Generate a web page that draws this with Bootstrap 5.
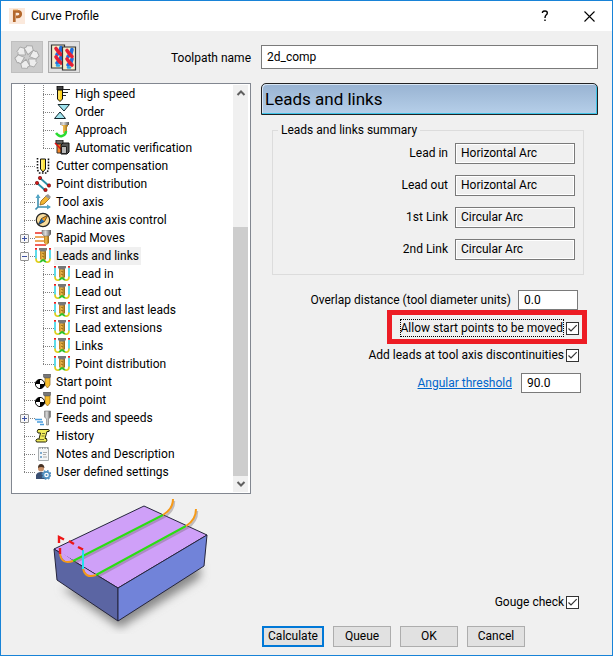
<!DOCTYPE html>
<html lang="en">
<head>
<meta charset="utf-8">
<meta name="viewport" content="width=device-width, initial-scale=1">
<title>Curve Profile</title>
<link href="https://cdn.jsdelivr.net/npm/bootstrap@5.3.0/dist/css/bootstrap.min.css" rel="stylesheet">
<style>
  body { font: 12px/18px Roboto, "Open Sans", sans-serif; color: #000; background: #f0f0f0; }
  .dialog { border: 1px solid #1883d7; }
  .titlebar { height: 30px; }
  .titlebar .logo { margin: 0 6px 0 8px; }
  .titlebar button, .scroller button, .tool { border: 0; background: none; padding: 0; color: #000; display: flex; align-items: center; justify-content: center; }
  .titlebar button { width: 45px; height: 28px; }
  .dialog-body { display: grid; grid-template-columns: 240px 1fr; grid-template-rows: 42px 1fr; column-gap: 10px; row-gap: 0; padding: 10px 14px 8px 10px; }
  .tools { gap: 5px; }
  .tool { width: 32px; height: 32px; border: 1px solid #adadad; background: #e1e1e1; }
  .tool:disabled { background: #ccc; border-color: #bfbfbf; }
  .form-control { font-size: 12px; line-height: 16px; color: #000; border: 1px solid #7a7a7a; border-radius: 0; padding: 0 5px; }
  .path-name { height: 24px; margin-top: 4px; }
  .tree { border: 1px solid #828790; background: #fff; height: 411px; }
  .tree ul { padding-top: 1px; }
  .tree li { height: 18px; display: flex; align-items: center; position: relative; padding-left: 12px; white-space: nowrap; }
  .tree svg { width: 16px; height: 16px; flex: none; margin-right: 3px; overflow: visible; }
  .tree a { color: #000; text-decoration: none; padding: 0 2px; }
  .tree a.current { background: #f0f0f0; }
  .stem, .arm { align-self: stretch; flex: none; background: repeating-linear-gradient(#808080 0 1px, transparent 1px 2px) 0 0 / 1px 100% no-repeat; }
  .stem { width: 19px; }
  .arm { width: 11px; background: repeating-linear-gradient(#808080 0 1px, transparent 1px 2px) 0 0 / 1px 100% no-repeat, repeating-linear-gradient(90deg, #808080 0 1px, transparent 1px 2px) 0 9px / 100% 1px no-repeat; }
  .arm.end { background-size: 1px 10px, 100% 1px; }
  .toggle { position: absolute; left: 8px; top: 5px; width: 9px; height: 9px; border: 1px solid #919191; border-radius: 1px; padding: 0; background: linear-gradient(#3c50a0, #3c50a0) center / 5px 1px no-repeat, #f8f8f8; }
  .toggle.closed { background: linear-gradient(#3c50a0, #3c50a0) center / 5px 1px no-repeat, linear-gradient(#3c50a0, #3c50a0) center / 1px 5px no-repeat, #f8f8f8; }
  .scroller { width: 15px; margin: 1px 2px 1px 0; background: #f0f0f0; }
  .scroller button { height: 16px; }
  .thumb { height: 249px; background: #cdcdcd; }
  .banner { height: 32px; font-size: 17px; line-height: 31px; padding-left: 3px; border: 1px solid #222; border-radius: 5px 5px 0 0; background: linear-gradient(#98b3d2, #b6cfe9); box-shadow: inset -1px -1px #3fc4e8, inset 1px 1px #d8e6f4; }
  .summary { margin: 6px 14px 0 11px; min-width: 0; border: 1px solid #dcdcdc; padding: 0 8px 9px; }
  .summary legend { float: none; width: auto; font-size: 12px; line-height: 18px; margin: 0 0 -2px -3px; padding: 0 3px; }
  .summary .form-control { width: 120px; height: 21px; background: #f0f0f0; box-shadow: inset 0 0 0 1px #fff; }
  .pair { display: flex; justify-content: flex-end; align-items: center; }
  .summary .pair { gap: 7px; height: 32px; }
  .number { width: 60px; height: 20px; }
  .overlap { margin-top: 14px; height: 21px; padding-right: 20px; gap: 7px; }
  .tick { height: 22px; padding-right: 19px; gap: 2px; }
  .marked { border: 5px solid #ed1c24; height: 34px; padding: 2px 3px 0 8px; margin-right: 11px; gap: 2px; }
  .marked label { border: 1px dotted #000; line-height: 16px; }
  .threshold { margin-top: 6px; height: 21px; padding-right: 17px; gap: 9px; }
  .threshold a { color: #0066cc; }
  .form-check-input { width: 13px; height: 13px; margin: 0; border: 1px solid #333; background-color: #fff; flex: none; }
  .form-check-input[type=checkbox] { border-radius: 0; }
  .form-check-input:checked { background-color: #fff; border-color: #333; background-size: 11px 11px; background-image: url("data:image/svg+xml,%3Csvg xmlns='http://www.w3.org/2000/svg' viewBox='0 0 11 11'%3E%3Cpath d='M1.5 5.5 4 8 9.7 2.2' fill='none' stroke='%23333' stroke-width='1.2'/%3E%3C/svg%3E"); }
  .actions { margin: 13px 0 0 1px; gap: 9px; }
  .actions .btn { width: 58px; height: 21px; padding: 0; font-size: 12px; line-height: 17px; color: #000; background: #e1e1e1; border: 1px solid #adadad; border-radius: 0; }
  .actions .btn.main { width: 62px; border: 2px solid #0078d7; }
  .picture { display: block; width: 180px; height: 140px; margin: 0 0 0 29px; }
</style>
<script src="https://cdn.jsdelivr.net/npm/bootstrap@5.3.0/dist/js/bootstrap.bundle.min.js"></script>
</head>
<body>
<svg class="visually-hidden" aria-hidden="true">
  <defs>
    <linearGradient id="gold"><stop offset="0" stop-color="#b87a1c"/><stop offset=".4" stop-color="#f2bd4c"/><stop offset="1" stop-color="#8e6214"/></linearGradient>
    <linearGradient id="steel"><stop offset="0" stop-color="#999"/><stop offset=".4" stop-color="#ddd"/><stop offset="1" stop-color="#555"/></linearGradient>
  </defs>
  <symbol id="i-speed" viewBox="0 0 16 16"><path d="M3 0h6v4H3z" fill="#444" stroke="#000" stroke-width=".8"/><path d="M3.500 4h5v9L6 15.500 3.500 13z" fill="#ffd21c" stroke="#111"/><path d="M5 5v8" stroke="#fff19a"/><path d="M9 3.500h7M9 6.500h5M9 9.500h3" stroke="#222"/></symbol>
  <symbol id="i-order" viewBox="0 0 16 16"><path d="M4 .5h11.500L10 7zM.5 14.500h11L6 8z" fill="#9fe3ee" stroke="#14262c"/></symbol>
  <symbol id="i-approach" viewBox="0 0 16 16"><path d="M7 2h7v2l-1 1v6l-2 1-2-1V4L7 3z" fill="url(#gold)"/><path d="M6 0h9v3H6z" fill="url(#steel)"/><path d="M2 11q3 4 6 3 4-1 4-5" fill="none" stroke="#2bdc32" stroke-width="2.500"/></symbol>
  <symbol id="i-auto" viewBox="0 0 16 16"><path d="M2 0h7v4H2z" fill="#666" stroke="#222"/><path d="M3 4h5v9H3z" fill="#f18427" stroke="#333"/><path d="M1 3l7 7" stroke="#dd1313" stroke-width="1.500"/><path d="M7 5l2-2h6v9l-2 2H7z" fill="#555" stroke="#111"/><path d="M7.500 6.500h5v7h-5z" fill="#b8b8b8" stroke="#222"/></symbol>
  <symbol id="i-cutter" viewBox="0 0 16 16"><path d="M5.500 1h5v10L8 14 5.500 11z" fill="#ffe33a" stroke="#111"/><path d="M7 2v9" stroke="#fff7ac"/><path d="M2.500 0v12l2 3h7l2-3V0" fill="none" stroke="#111" stroke-width="1.600" stroke-dasharray="1.600 1.400"/></symbol>
  <symbol id="i-dots" viewBox="0 0 16 16"><path d="M5 2l9 8M2 7l9 8" stroke="#2c8ea6" stroke-width="1.800"/><g fill="#d11717" stroke="#660808" stroke-width=".6"><circle cx="5" cy="2" r="1.700"/><circle cx="14" cy="9.500" r="1.700"/><circle cx="2" cy="7" r="1.700"/><circle cx="10.500" cy="14" r="1.700"/></g></symbol>
  <symbol id="i-axis" viewBox="0 0 16 16"><path d="M3 1v12h12M3 13l-2.500 2.500" fill="none" stroke="#3f8faf" stroke-width="1.600"/><path d="M.5 4L3 0l2.500 4zM12 10.500l4 2.500-4 2.500z" fill="#54a6c5"/><path d="M5 11l1-4 6-6 3 3-6 6z" fill="#f3b633" stroke="#926113" stroke-width=".8"/><path d="M10 2l3-2 3 3-2 2z" fill="#999"/></symbol>
  <symbol id="i-compass" viewBox="0 0 16 16"><circle cx="8" cy="8" r="6.700" fill="#f8dc9c" stroke="#252525" stroke-width="1.200"/><path d="M13 3L9.500 9.500 6.500 6.500z" fill="#f09a1a"/><path d="M3 13l3.500-6.500 3 3z" fill="#1768b5"/><path d="M13 3L6.500 6.500 3 13l6.500-3.500z" fill="none" stroke="#222" stroke-width=".7"/></symbol>
  <symbol id="i-rapid" viewBox="0 0 16 16"><path d="M0 3h9M0 15h11" stroke="#ec2e24" stroke-width="1.600"/><path d="M0 7h9M0 11h10" stroke="#e88d2a" stroke-width="1.400"/><path d="M9 4h5v9l-2.500 2L9 13z" fill="url(#gold)"/><path d="M7 0h9v4l-2 2H9L7 4z" fill="url(#steel)" stroke="#666" stroke-width=".5"/></symbol>
  <symbol id="i-leads" viewBox="0 0 16 16"><path d="M5 3h6v8l-2 2H7l-2-2z" fill="url(#gold)"/><path d="M7 5l2 1M7 8l2 1" stroke="#825610" stroke-width=".8"/><path d="M4 0h8v2l-2 1.500H6L4 2z" fill="#777"/><path d="M1 2v9M15 2v9" stroke="#35d3e5" stroke-width="1.600"/><path d="M0 .8h2M14 .8h2" stroke="#e91c1c" stroke-width="1.800"/><path d="M1 10.500q0 4.500 4 3.500M15 10.500q0 4.500-4 3.500" fill="none" stroke="#dfce1c" stroke-width="1.800"/><path d="M5 14l3-2 3 2" fill="none" stroke="#2ec32a" stroke-width="2"/></symbol>
  <symbol id="i-point" viewBox="0 0 16 16"><path d="M10 3h5v8l-2.500 3L10 11z" fill="#f6bd2c" stroke="#8e6214" stroke-width=".7"/><path d="M8.500 0h7v3l-1 1h-5l-1-1z" fill="#777" stroke="#444" stroke-width=".5"/><circle cx="5" cy="10" r="4.600" fill="#fff" stroke="#000"/><path d="M5 10V5.400A4.600 4.600 0 0 0 .4 10zM5 10v4.600A4.600 4.600 0 0 0 9.600 10z" fill="#000"/></symbol>
  <symbol id="i-feed" viewBox="0 0 16 16"><path d="M0 9.500h7M2 12h6M5 14.500h4" stroke="#4a9ddd" stroke-width="1.300"/><path d="M9.500 1h6v6l-2 2v6h-2V9l-2-2z" fill="url(#steel)" stroke="#777" stroke-width=".6"/></symbol>
  <symbol id="i-history" viewBox="0 0 16 16"><path d="M3 1.500h10q2 0 1 2h-2l-2 7h1.500q1.500 3-1 3.500H1.500q-1.500-2 .5-3h2l1.500-6H3q-1.500-1.500 0-3.500z" fill="#f1ec5a" stroke="#25250b"/><path d="M7 5.500h3M6.500 8h3M4 11.500h5" stroke="#555525" stroke-width=".8"/></symbol>
  <symbol id="i-notes" viewBox="0 0 16 16"><path d="M3.500 1.500h10v13h-10z" fill="#f3f5f6" stroke="#a8adb0"/><path d="M5 1v2M7.500 1v2M10 1v2M12.500 1v2" stroke="#8d9295"/><path d="M5 6h2v2H5zM5 10h2v2H5z" fill="#7eaace"/><path d="M8 6.500h4M8 8.500h3M8 11h4" stroke="#9a9a9a" stroke-width=".8"/></symbol>
  <symbol id="i-user" viewBox="0 0 16 16"><path d="M1 15v-4q1-3 5-3t5 3v4z" fill="#3a4f72"/><circle cx="6" cy="4.500" r="3" fill="#c89068"/><path d="M3 4q0-4 3-4t3.500 4Q6 2 3 4" fill="#463225"/><circle cx="11.500" cy="11" r="3.100" fill="#fff" stroke="#5292c2" stroke-width="1.600"/><circle cx="11.500" cy="11" r="4.300" fill="none" stroke="#5292c2" stroke-width="1.400" stroke-dasharray="1.600 1.780"/><circle cx="11.500" cy="11" r="1" fill="#5292c2"/></symbol>
</svg>

<div class="dialog min-vh-100 d-flex flex-column">
  <header class="titlebar bg-white d-flex align-items-center">
    <svg class="logo" width="16" height="16" viewBox="0 0 16 16" aria-hidden="true"><path d="M0 0h16v16H0z" fill="#fbe9dc"/><path d="M5.300 14V3.300h3.200q3.200 0 3.200 2.700t-3.200 2.900H7" fill="none" stroke="#b3672c" stroke-width="2.700"/><path d="M4 2h5" stroke="#e7a75b"/></svg>
    <span class="me-auto">Curve Profile</span>
    <button type="button" aria-label="Help"><svg width="8" height="12" viewBox="0 0 8 12"><path d="M1.500 3V2Q2 1 4 1q2.300 0 2.300 2 0 1.200-1.200 2Q4 6 4 8M4 9.500v1.500" fill="none" stroke="#000" stroke-width="1.400"/></svg></button>
    <button type="button" aria-label="Close"><svg width="11" height="11" viewBox="0 0 11 11"><path d="M.5.5l10 10m0-10l-10 10" stroke="#000" stroke-width="1.100"/></svg></button>
  </header>

  <main class="dialog-body flex-grow-1">
    <div class="tools d-flex align-items-start">
      <button class="tool" type="button" disabled aria-label="Recycle toolpath">
        <svg width="28" height="28" viewBox="0 0 28 28"><g fill="#ededed" stroke="#a6a6a6" stroke-width=".9" stroke-linejoin="round"><g id="leaf"><path d="M4 8.500l3-4.500 5 1.500-.5 1 1 5.500H5V9.500z"/></g><use href="#leaf" transform="rotate(60 14 14)"/><use href="#leaf" transform="rotate(120 14 14)"/><use href="#leaf" transform="rotate(180 14 14)"/><use href="#leaf" transform="rotate(240 14 14)"/><use href="#leaf" transform="rotate(300 14 14)"/></g></svg>
      </button>
      <button class="tool" type="button" aria-label="Copy toolpath">
        <svg width="28" height="28" viewBox="0 0 28 28"><g id="card-strip"><path d="M1.500 2h13v23h-13z" fill="#f4ecc8" stroke="#333" stroke-width="1.200"/><g fill="none" stroke-linecap="round" stroke-width="3.600"><path d="M11 4.500l-1 4-3 3M11 14l-1 3-3 3" stroke="#1f6fe0"/><path d="M6 5.500l3 4 2 2M6 14l3 4 2 2" stroke="#e51f36"/><path d="M7 22.500h2" stroke="#2aa5e6" stroke-width="2.500"/></g></g><use href="#card-strip" x="11" y="2"/></svg>
      </button>
      <label for="path" class="mt-1 pt-1 ms-auto">Toolpath name</label>
    </div>
    <div><input id="path" class="form-control path-name" value="2d_comp"></div>

    <div>
      <nav class="tree d-flex" aria-label="Pages">
        <ul class="list-unstyled mb-0 flex-grow-1 overflow-hidden">
          <li><span class="stem"></span><span class="arm"></span><svg><use href="#i-speed"/></svg><a href="#">High speed</a></li>
          <li><span class="stem"></span><span class="arm"></span><svg><use href="#i-order"/></svg><a href="#">Order</a></li>
          <li><span class="stem"></span><span class="arm"></span><svg><use href="#i-approach"/></svg><a href="#">Approach</a></li>
          <li><span class="stem"></span><span class="arm end"></span><svg><use href="#i-auto"/></svg><a href="#">Automatic verification</a></li>
          <li><span class="arm"></span><svg><use href="#i-cutter"/></svg><a href="#">Cutter compensation</a></li>
          <li><span class="arm"></span><svg><use href="#i-dots"/></svg><a href="#">Point distribution</a></li>
          <li><span class="arm"></span><svg><use href="#i-axis"/></svg><a href="#">Tool axis</a></li>
          <li><span class="arm"></span><svg><use href="#i-compass"/></svg><a href="#">Machine axis control</a></li>
          <li><span class="arm"></span><button class="toggle closed" type="button" aria-label="Expand"></button><svg><use href="#i-rapid"/></svg><a href="#">Rapid Moves</a></li>
          <li><span class="arm"></span><button class="toggle" type="button" aria-label="Collapse"></button><svg><use href="#i-leads"/></svg><a href="#" class="current">Leads and links</a></li>
          <li><span class="stem"></span><span class="arm"></span><svg><use href="#i-leads"/></svg><a href="#">Lead in</a></li>
          <li><span class="stem"></span><span class="arm"></span><svg><use href="#i-leads"/></svg><a href="#">Lead out</a></li>
          <li><span class="stem"></span><span class="arm"></span><svg><use href="#i-leads"/></svg><a href="#">First and last leads</a></li>
          <li><span class="stem"></span><span class="arm"></span><svg><use href="#i-leads"/></svg><a href="#">Lead extensions</a></li>
          <li><span class="stem"></span><span class="arm"></span><svg><use href="#i-leads"/></svg><a href="#">Links</a></li>
          <li><span class="stem"></span><span class="arm end"></span><svg><use href="#i-leads"/></svg><a href="#">Point distribution</a></li>
          <li><span class="arm"></span><svg><use href="#i-point"/></svg><a href="#">Start point</a></li>
          <li><span class="arm"></span><svg><use href="#i-point"/></svg><a href="#">End point</a></li>
          <li><span class="arm"></span><button class="toggle closed" type="button" aria-label="Expand"></button><svg><use href="#i-feed"/></svg><a href="#">Feeds and speeds</a></li>
          <li><span class="arm"></span><svg><use href="#i-history"/></svg><a href="#">History</a></li>
          <li><span class="arm"></span><svg><use href="#i-notes"/></svg><a href="#">Notes and Description</a></li>
          <li><span class="arm end"></span><svg><use href="#i-user"/></svg><a href="#">User defined settings</a></li>
        </ul>
        <div class="scroller d-flex flex-column">
          <button type="button" aria-label="Scroll up"><svg class="m-0" viewBox="0 0 16 16"><path d="M4.500 10L8 6.500l3.500 3.500" fill="none" stroke="#606060" stroke-width="2"/></svg></button>
          <div class="thumb mt-auto"></div>
          <button type="button" aria-label="Scroll down"><svg class="m-0" viewBox="0 0 16 16"><path d="M4.500 6L8 9.500 11.500 6" fill="none" stroke="#606060" stroke-width="2"/></svg></button>
        </div>
      </nav>
      <svg class="picture" viewBox="0 0 180 140" role="img" aria-label="Block with two linked toolpaths">
        <defs><filter id="soft" x="-20%" y="-20%" width="140%" height="140%"><feGaussianBlur stdDeviation="5"/></filter></defs>
        <path d="M20 92l58 40 80-50v-14L80 88z" fill="#888" filter="url(#soft)" transform="translate(2 2)"/>
        <g stroke="#25253c" stroke-width="1" stroke-linejoin="round">
          <path d="M14 55l90-43 63 29-89 53z" fill="#cfa0f8"/>
          <path d="M14 55l64 39v33L17 86z" fill="#5b65a3"/>
          <path d="M78 94l89-53-3 31-86 55z" fill="#7183d9"/>
        </g>
        <path d="M20 57q2 14 13 9.500zM43 73q3 12 13 8z" fill="#cfa0f8"/>
        <g fill="none" stroke="#776b70" stroke-opacity=".4" stroke-width="2.500" transform="translate(1 2)"><path d="M33 67l90-46q10-6 10-16M56 81l90-49q10-6 10-17"/></g>
        <g fill="none" stroke-width="2"><path d="M33 67l90-46M56 81l90-49" stroke="#2bdd13"/><path d="M123 21q10-6 10-16M146 32q10-6 10-17M20 59q1 12 13 8M43 74q2 11 13 7" stroke="#f69a18"/><path d="M43 56v19" stroke="#24e2ed"/><path d="M43 55.500l-5-2.500M34 50l-5-3M20 54v6" stroke="#ed1717" stroke-width="2.400"/><path d="M19 49v-6l5 2.500" stroke="#ed1717" stroke-width="2.400"/></g>
      </svg>
    </div>

    <form class="d-flex flex-column">
      <h1 class="banner mb-0 fw-normal">Leads and links</h1>
      <fieldset class="summary">
        <legend>Leads and links summary</legend>
        <div class="pair"><label for="li">Lead in</label><input id="li" class="form-control" value="Horizontal Arc" readonly></div>
        <div class="pair"><label for="lo">Lead out</label><input id="lo" class="form-control" value="Horizontal Arc" readonly></div>
        <div class="pair"><label for="l1">1st Link</label><input id="l1" class="form-control" value="Circular Arc" readonly></div>
        <div class="pair"><label for="l2">2nd Link</label><input id="l2" class="form-control" value="Circular Arc" readonly></div>
      </fieldset>
      <div class="pair overlap"><label for="ov">Overlap distance (tool diameter units)</label><input id="ov" class="form-control number" value="0.0"></div>
      <div class="pair marked align-self-end"><label for="mv">Allow start points to be moved</label><input id="mv" class="form-check-input" type="checkbox" checked></div>
      <div class="pair tick"><label for="dc">Add leads at tool axis discontinuities</label><input id="dc" class="form-check-input" type="checkbox" checked></div>
      <div class="pair threshold"><a href="#" id="at">Angular threshold</a><input class="form-control number" aria-labelledby="at" value="90.0"></div>
      <div class="pair tick mt-auto"><label for="gc">Gouge check</label><input id="gc" class="form-check-input" type="checkbox" checked></div>
      <div class="actions d-flex">
        <button type="submit" class="btn main">Calculate</button>
        <button type="button" class="btn">Queue</button>
        <button type="button" class="btn">OK</button>
        <button type="button" class="btn">Cancel</button>
      </div>
    </form>
  </main>
</div>
</body>
</html>
